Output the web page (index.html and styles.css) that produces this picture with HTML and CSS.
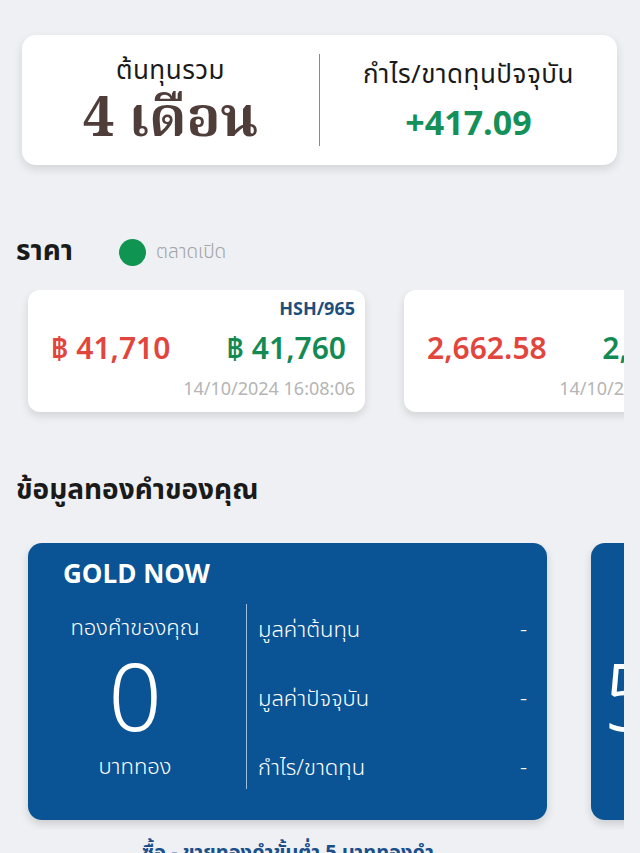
FILE: index.html
```html
<!DOCTYPE html>
<html lang="th">

<head>
    <meta charset="UTF-8">
    <meta name="viewport" content="width=device-width, initial-scale=1.0">
    <title>ทองคำของคุณ</title>
    <link rel="stylesheet" href="styles.css">
</head>

<body>
    <div class="summary">
        <div class="summary-col">
            <div class="summary-label">ต้นทุนรวม</div>
            <div class="summary-months">4 เดือน</div>
        </div>
        <div class="summary-divider"></div>
        <div class="summary-col">
            <div class="summary-label">กำไร/ขาดทุนปัจจุบัน</div>
            <div class="summary-profit">+417.09</div>
        </div>
    </div>

    <div class="section-head">
        <h2 class="section-title">ราคา</h2>
        <span class="market-dot"></span>
        <span class="market-text">ตลาดเปิด</span>
    </div>

    <div class="scroller price-row">
        <div class="price-card">
            <div class="price-code">HSH/965</div>
            <div class="price-values">
                <span class="price sell">฿ 41,710</span>
                <span class="price buy">฿ 41,760</span>
            </div>
            <div class="price-time">14/10/2024 16:08:06</div>
        </div>
        <div class="price-card">
            <div class="price-code"></div>
            <div class="price-values">
                <span class="price sell">2,662.58</span>
                <span class="price buy">2,663.08</span>
            </div>
            <div class="price-time">14/10/2024 16:08:06</div>
        </div>
    </div>

    <h2 class="section-title info-title">ข้อมูลทองคำของคุณ</h2>

    <div class="scroller gold-row">
        <div class="gold-card">
            <div class="gold-brand">GOLD NOW</div>
            <div class="gold-body">
                <div class="gold-left">
                    <div class="gold-small gold-top">ทองคำของคุณ</div>
                    <div class="gold-amount">0</div>
                    <div class="gold-small">บาททอง</div>
                </div>
                <div class="gold-right">
                    <div class="gold-line"><span>มูลค่าต้นทุน</span><span>-</span></div>
                    <div class="gold-line"><span>มูลค่าปัจจุบัน</span><span>-</span></div>
                    <div class="gold-line"><span>กำไร/ขาดทุน</span><span>-</span></div>
                </div>
            </div>
        </div>
        <div class="gold-card gold-card-next">
            <div class="gold-brand">&nbsp;</div>
            <div class="gold-body">
                <div class="gold-left">
                    <div class="gold-small gold-top">&nbsp;</div>
                    <div class="gold-amount">5</div>
                    <div class="gold-small">&nbsp;</div>
                </div>
            </div>
        </div>
    </div>

    <p class="note">ซื้อ - ขายทองคำขั้นต่ำ 5 บาททองคำ</p>
</body>

</html>
```

FILE: styles.css
```css
body {
    font-family: "Noto Sans Thai", "Noto Sans", "DejaVu Sans", sans-serif;
    background-color: #eef0f3;
    color: #1a1a1a;
    margin: 0;
    padding: 0;
    overflow: hidden;
}

.summary {
    display: flex;
    align-items: center;
    height: 130px;
    margin: 35px 23px 0 22px;
    background-color: #fff;
    border-radius: 14px;
    box-shadow: 0 4px 10px rgba(0, 0, 0, 0.12);
}

.summary-col {
    flex: 1;
    text-align: center;
    padding-top: 6px;
}

.summary-divider {
    width: 1px;
    height: 92px;
    background-color: #8a8a8a;
}

.summary-label {
    font-size: 26px;
    line-height: 34px;
    letter-spacing: 0.5px;
}

.summary-months {
    font-family: "Noto Serif Thai", "Liberation Serif", serif;
    font-size: 56px;
    font-weight: 700;
    line-height: 64px;
    color: #4e3d38;
    margin-top: 1px;
}

.summary-profit {
    font-size: 34px;
    font-weight: 700;
    line-height: 48px;
    color: #15905a;
    margin-top: 9px;
}

.section-head {
    display: flex;
    align-items: center;
    margin: 68px 0 0 16px;
}

.section-title {
    font-size: 28px;
    font-weight: 700;
    line-height: 38px;
    margin: 0;
}

.market-dot {
    width: 27px;
    height: 27px;
    border-radius: 50%;
    background-color: #0f9452;
    margin-left: 46px;
}

.market-text {
    font-size: 19px;
    font-weight: 300;
    color: #a3a3a3;
    margin-left: 10px;
}

.scroller {
    display: flex;
    width: 624px;
    overflow: hidden;
    padding-left: 28px;
    box-sizing: border-box;
}

.price-row {
    gap: 39px;
    margin-top: 19px;
    padding-bottom: 12px;
}

.price-card {
    flex: 0 0 337px;
    height: 122px;
    box-sizing: border-box;
    padding: 8px 10px 0 23px;
    background-color: #fff;
    border-radius: 12px;
    box-shadow: 0 4px 8px rgba(0, 0, 0, 0.12);
}

.price-code {
    text-align: right;
    font-size: 18px;
    font-weight: 700;
    color: #1d4f7c;
    height: 24px;
    line-height: 24px;
}

.price-values {
    display: flex;
    justify-content: space-between;
    padding-right: 9px;
    margin-top: 8px;
}

.price {
    font-size: 30px;
    font-weight: 600;
    line-height: 40px;
}

.sell {
    color: #e2453c;
}

.buy {
    color: #138a53;
}

.price-time {
    text-align: right;
    font-size: 18px;
    line-height: 24px;
    color: #b5b5b5;
    margin-top: 8px;
}

.info-title {
    margin: 48px 0 0 16px;
}

.gold-row {
    gap: 44px;
    margin-top: 33px;
    padding-bottom: 10px;
}

.gold-card {
    flex: 0 0 519px;
    height: 277px;
    box-sizing: border-box;
    padding: 16px 20px 0 35px;
    background-color: #0a5394;
    border-radius: 14px;
    color: #fff;
    box-shadow: 0 4px 8px rgba(0, 0, 0, 0.15);
}

.gold-card-next {
    padding-left: 12px;
}

.gold-card-next .gold-left {
    text-align: left;
}

.gold-brand {
    font-size: 26px;
    font-weight: 700;
    line-height: 32px;
}

.gold-body {
    display: flex;
    margin-top: 13px;
}

.gold-left {
    width: 144px;
    margin-right: 39px;
    text-align: center;
    font-weight: 300;
}

.gold-small {
    font-size: 22px;
    line-height: 30px;
}

.gold-top {
    margin-top: 10px;
}

.gold-amount {
    font-size: 94px;
    font-weight: 300;
    line-height: 104px;
    margin: 6px 0 -1px;
}

.gold-right {
    flex: 1;
    border-left: 1.5px solid #9fc0e0;
    padding: 10px 0 4px 11px;
    display: flex;
    flex-direction: column;
    justify-content: space-between;
    height: 185px;
    box-sizing: border-box;
}

.gold-line {
    display: flex;
    justify-content: space-between;
    font-size: 22px;
    font-weight: 300;
}

.note {
    margin: 8px 0 0;
    text-align: center;
    width: 576px;
    font-size: 20px;
    font-weight: 700;
    color: #1a4f8a;
}
```
